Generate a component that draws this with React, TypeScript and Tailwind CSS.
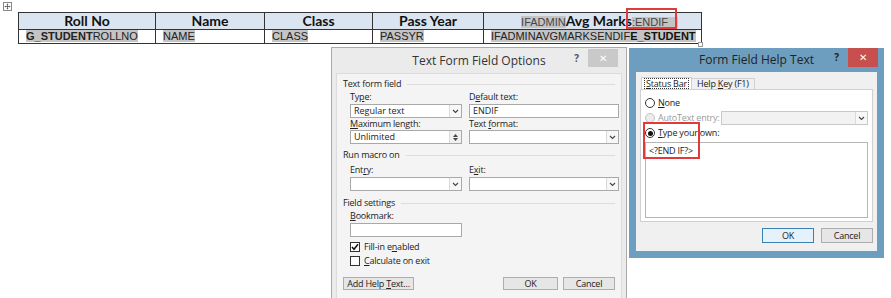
import React from 'react';

const ui = { fontFamily: '"Open Sans", "Noto Sans", sans-serif' };

function Chevron() {
  return (
    <svg width="7" height="5" viewBox="0 0 7 5">
      <path d="M1 1 L3.5 3.5 L6 1" fill="none" stroke="#444" strokeWidth="1.1" />
    </svg>
  );
}

function Select({ value = '', disabled = false }: { value?: string; disabled?: boolean }) {
  return (
    <div className={`flex h-[14px] border ${disabled ? 'border-[#c8c8c8] bg-[#f2f2f2]' : 'border-[#a9a9a9] bg-white'}`}>
      <div className="flex flex-1 items-center pl-[3px] text-[9px] text-[#222]">{value}</div>
      <div className="flex w-[12px] items-center justify-center border-l border-[#dadada] bg-[#f7f7f7]">
        <Chevron />
      </div>
    </div>
  );
}

function Spin({ value }: { value: string }) {
  return (
    <div className="flex h-[14px] border border-[#a9a9a9] bg-white">
      <div className="flex flex-1 items-center pl-[3px] text-[9px] text-[#222]">{value}</div>
      <div className="flex w-[12px] flex-col items-center justify-center gap-[1px] border-l border-[#dadada] bg-[#f0f0f0]">
        <svg width="5" height="3" viewBox="0 0 5 3"><path d="M0 3 L2.5 0 L5 3 Z" fill="#444" /></svg>
        <svg width="5" height="3" viewBox="0 0 5 3"><path d="M0 0 L2.5 3 L5 0 Z" fill="#444" /></svg>
      </div>
    </div>
  );
}

function Input({ value = '' }: { value?: string }) {
  return (
    <div className="flex h-[14px] items-center border border-[#a9a9a9] bg-white pl-[3px] text-[9px] text-[#222]">
      {value}
    </div>
  );
}

function Label({ pre, key_, post }: { pre: string; key_: string; post: string }) {
  return (
    <div className="flex h-[12px] items-center text-[9px] tracking-[-0.2px] text-[#222]">
      <span>
        {pre}
        <span className="underline underline-offset-1">{key_}</span>
        {post}
      </span>
    </div>
  );
}

function GroupLabel({ text }: { text: string }) {
  return (
    <div className="flex h-[14px] items-center gap-[6px] pr-[2px] text-[9px] tracking-[-0.2px] text-[#222]">
      <span>{text}</span>
      <div className="h-px flex-1 bg-[#dcdcdc]" />
    </div>
  );
}

function Button({ children, w, def = false, h = 'h-[13px]' }: { children: React.ReactNode; w: string; def?: boolean; h?: string }) {
  return (
    <div
      className={`flex ${h} ${w} items-center justify-center border text-[9px] tracking-[-0.2px] text-[#222] ${
        def ? 'border-[#3c7fb1] bg-[#e5f1fb]' : 'border-[#adadad] bg-[#e6e6e6]'
      }`}
    >
      {children}
    </div>
  );
}

function Checkbox({ checked }: { checked: boolean }) {
  return (
    <div className="flex h-[10px] w-[10px] items-center justify-center border border-[#333] bg-white">
      {checked && (
        <svg width="8" height="8" viewBox="0 0 8 8">
          <path d="M1 4 L3 6.3 L7 1.2" fill="none" stroke="#111" strokeWidth="1.5" />
        </svg>
      )}
    </div>
  );
}

function Radio({ on, disabled = false }: { on: boolean; disabled?: boolean }) {
  return (
    <div
      className={`flex h-[10px] w-[10px] shrink-0 items-center justify-center rounded-full border ${
        disabled ? 'border-[#c0c0c0] bg-[#ececec]' : 'border-[#333] bg-white'
      }`}
    >
      {on && <div className="h-[5px] w-[5px] rounded-full bg-[#111]" />}
    </div>
  );
}

function MoveHandle() {
  return (
    <svg width="9" height="9" viewBox="0 0 9 9">
      <rect x="0.5" y="0.5" width="8" height="8" fill="white" stroke="#888" />
      <path d="M4.5 1.8 V7.2 M1.8 4.5 H7.2" stroke="#555" strokeWidth="0.8" />
      <path d="M4.5 1.5 L3.5 2.7 H5.5 Z M4.5 7.5 L3.5 6.3 H5.5 Z M1.5 4.5 L2.7 3.5 V5.5 Z M7.5 4.5 L6.3 3.5 V5.5 Z" fill="#555" />
    </svg>
  );
}

const hl = 'bg-[#c4c4c4] text-[#222]';

function DocTable() {
  const head = 'border border-[#333] bg-[#dbe5f1] p-0 text-center align-middle text-[14px] font-bold leading-none text-[#111]';
  const cell = 'border border-[#333] p-0 pl-[7px] text-left align-middle text-[11px] leading-none text-[#222]';
  return (
    <div className="relative pl-[18px] pt-[12px]">
      <div className="absolute left-[3px] top-[2px]">
        <MoveHandle />
      </div>
      <table className="border-collapse" style={{ fontFamily: '"Liberation Sans", Arial, sans-serif' }}>
        <tbody>
          <tr className="h-[17px]" style={{ fontFamily: 'Lato, sans-serif' }}>
            <td className={`${head} w-[137px]`}>Roll No</td>
            <td className={`${head} w-[109px]`}>Name</td>
            <td className={`${head} w-[108px]`}>Class</td>
            <td className={`${head} w-[111px]`}>Pass Year</td>
            <td className={`${head} w-[218px] pl-[14px]`}>
              <span className={`${hl} text-[11px] font-normal text-[#444]`} style={{ fontFamily: '"Liberation Sans", Arial, sans-serif' }}>
                IFADMIN
              </span>
              Avg Marks
              <span className={`${hl} inline-block w-[46px] text-left text-[11px] font-normal text-[#444]`} style={{ fontFamily: '"Liberation Sans", Arial, sans-serif' }}>
                :ENDIF
              </span>
            </td>
          </tr>
          <tr className="h-[14px]">
            <td className={cell}>
              <span className={hl}>
                <b>G_STUDENT</b>ROLLNO
              </span>
            </td>
            <td className={cell}>
              <span className={hl}>NAME</span>
            </td>
            <td className={cell}>
              <span className={hl}>CLASS</span>
            </td>
            <td className={cell}>
              <span className={hl}>PASSYR</span>
            </td>
            <td className={`${cell} pl-[6px] whitespace-nowrap`}>
              <span className={hl}>
                IFADMINAVGMARKSENDIF<b className="text-[#111]">E_STUDENT</b>
              </span>
            </td>
          </tr>
        </tbody>
      </table>
      <div className="absolute left-[626px] top-[8px] h-[21px] w-[51px] border-2 border-[#e2393b]" />
      <div className="absolute left-[698px] top-[42px] h-[5px] w-[5px] border border-[#999] bg-white" />
    </div>
  );
}

function TextFormFieldOptions() {
  return (
    <div className="absolute left-[331px] top-[47px] flex h-[260px] w-[296px] flex-col border border-[#aaaaaa] bg-[#ebebeb] px-[4px]" style={ui}>
      <div className="relative flex h-[25px] shrink-0 items-center justify-center text-[12px] text-[#333]">
        Text Form Field Options
        <span className="absolute right-[43px] top-[3px] text-[10px] font-bold text-[#555]">?</span>
        <div className="absolute right-[4px] top-[1px] flex h-[18px] w-[30px] items-center justify-center bg-[#c9c9c9] text-[10px] text-white">
          ✕
        </div>
      </div>
      <div className="flex flex-1 flex-col border border-[#dcdcdc] bg-[#f4f4f4] pl-[6px] pr-[4px] pt-[3px]">
        <GroupLabel text="Text form field" />
        <div className="grid grid-cols-[112px_150px] gap-x-[7px] pl-[7px]">
          <Label pre="Ty" key_="p" post="e:" />
          <Label pre="D" key_="e" post="fault text:" />
          <div className="mt-[1px]"><Select value="Regular text" /></div>
          <div className="mt-[1px]"><Input value="ENDIF" /></div>
          <Label pre="" key_="M" post="aximum length:" />
          <Label pre="Text " key_="f" post="ormat:" />
          <Spin value="Unlimited" />
          <Select />
        </div>
        <div className="mt-[4px]"><GroupLabel text="Run macro on" /></div>
        <div className="mt-[2px] grid grid-cols-[112px_150px] gap-x-[7px] pl-[7px]">
          <Label pre="Ent" key_="r" post="y:" />
          <Label pre="E" key_="x" post="it:" />
          <div className="mt-[1px]"><Select /></div>
          <div className="mt-[1px]"><Select /></div>
        </div>
        <div className="mt-[5px]"><GroupLabel text="Field settings" /></div>
        <div className="flex flex-col pl-[7px]">
          <Label pre="" key_="B" post="ookmark:" />
          <div className="mt-[1px] w-[112px]"><Input /></div>
          <div className="mt-[3px] flex h-[14px] items-center gap-[4px] text-[9px] tracking-[-0.2px] text-[#222]">
            <Checkbox checked />
            <span>
              Fill-in e<span className="underline underline-offset-1">n</span>abled
            </span>
          </div>
          <div className="flex h-[14px] items-center gap-[4px] text-[9px] tracking-[-0.2px] text-[#222]">
            <Checkbox checked={false} />
            <span>
              <span className="underline underline-offset-1">C</span>alculate on exit
            </span>
          </div>
        </div>
        <div className="mt-[9px] flex items-center">
          <Button w="w-[71px]">
            <span>
              Add Help <span className="underline underline-offset-1">T</span>ext...
            </span>
          </Button>
          <div className="ml-auto flex gap-[5px] pr-[2px]">
            <Button w="w-[55px]">OK</Button>
            <Button w="w-[52px]">Cancel</Button>
          </div>
        </div>
      </div>
    </div>
  );
}

function FormFieldHelpText() {
  return (
    <div className="absolute left-[629px] top-[48px] flex h-[210px] w-[255px] flex-col bg-[#6d9ebf] px-[7px] pb-[7px]" style={ui}>
      <div className="relative flex h-[24px] shrink-0 items-center justify-center text-[12px] text-[#222]">
        Form Field Help Text
        <span className="absolute right-[38px] top-[2px] text-[10px] font-bold text-[#222]">?</span>
        <div className="absolute right-[-1px] top-0 flex h-[19px] w-[30px] items-center justify-center bg-[#c7504f] text-[10px] text-white">
          ✕
        </div>
      </div>
      <div className="flex flex-1 flex-col bg-[#f0f0f0] px-[4px] pt-[5px]">
        <div className="flex h-[12px] items-end pl-[1px] text-[9px] tracking-[-0.2px] text-[#222]">
          <div className="flex h-[12px] items-center border border-b-0 border-[#d0d0d0] bg-white px-[2px]">
            <span className="border border-dotted border-[#333] px-[1px] leading-[9px]">
              <span className="underline underline-offset-1">S</span>tatus Bar
            </span>
          </div>
          <div className="flex h-[11px] items-center border border-b-0 border-l-0 border-[#d0d0d0] bg-[#f0f0f0] px-[5px]">
            <span>
              Help <span className="underline underline-offset-1">K</span>ey (F1)
            </span>
          </div>
        </div>
        <div className="relative flex h-[133px] flex-col border border-[#d0d0d0] bg-white pl-[4px] pr-[4px] pt-[6px] text-[9px] tracking-[-0.2px] text-[#222]">
          <div className="flex h-[14px] items-center gap-[3px]">
            <Radio on={false} />
            <span>
              <span className="underline underline-offset-1">N</span>one
            </span>
          </div>
          <div className="flex h-[16px] items-center gap-[3px] text-[#9a9a9a]">
            <Radio on={false} disabled />
            <span className="w-[60px] shrink-0 whitespace-nowrap">
              <span className="underline underline-offset-1">A</span>utoText entry:
            </span>
            <div className="flex-1"><Select disabled /></div>
          </div>
          <div className="flex h-[14px] items-center gap-[3px]">
            <Radio on />
            <span>
              <span className="underline underline-offset-1">T</span>ype your own:
            </span>
          </div>
          <div className="mt-[2px] h-[76px] border border-[#b5b5b5] bg-white px-[3px] pt-[1px]">&lt;?END IF?&gt;</div>
          <div className="absolute left-[2px] top-[32px] h-[37px] w-[57px] border-2 border-[#e2393b]" />
        </div>
        <div className="mt-[6px] flex justify-end gap-[7px]">
          <Button w="w-[52px]" def h="h-[15px]">OK</Button>
          <Button w="w-[52px]" h="h-[15px]">Cancel</Button>
        </div>
      </div>
    </div>
  );
}

export default function App() {
  return (
    <div className="relative h-[298px] w-[891px] overflow-hidden bg-white">
      <DocTable />
      <TextFormFieldOptions />
      <FormFieldHelpText />
    </div>
  );
}
